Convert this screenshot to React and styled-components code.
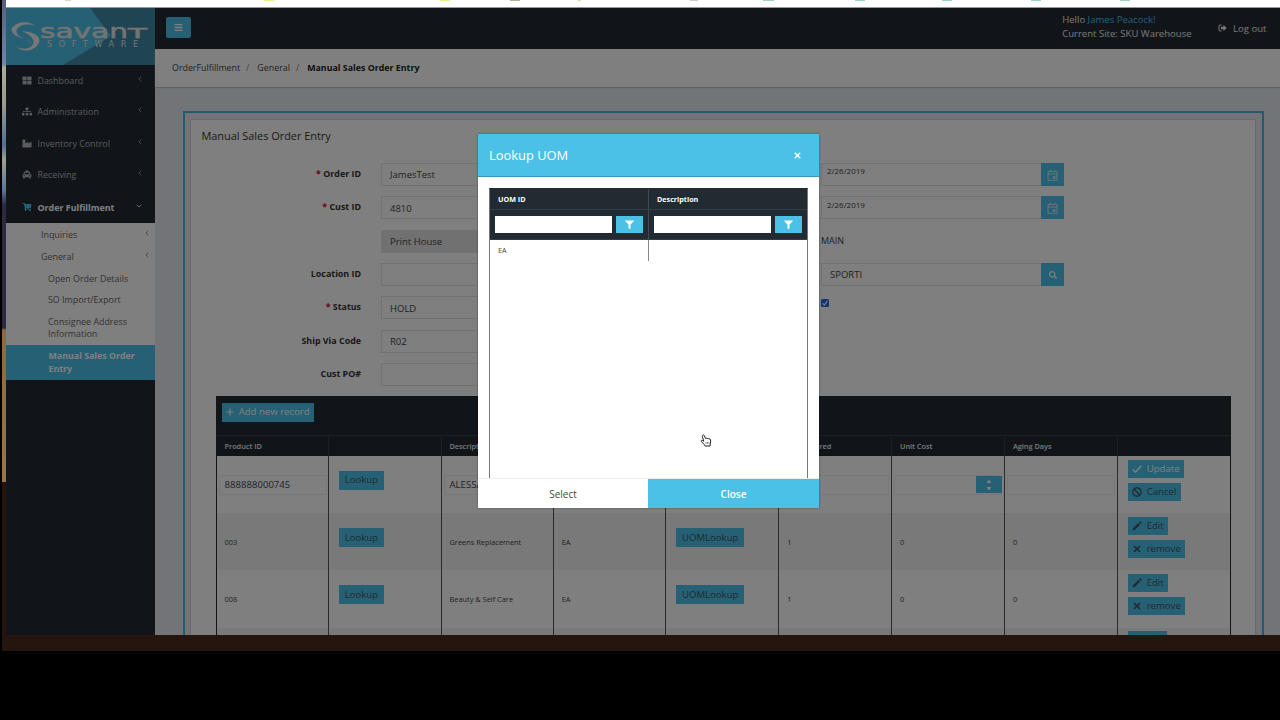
import React from 'react';
import styled, { createGlobalStyle, css } from 'styled-components';
import {
    FaThLarge,
    FaSitemap,
    FaIndustry,
    FaTaxi,
    FaShoppingCart,
    FaBars,
    FaSearch,
} from 'react-icons/fa';

const COLOR = {
    primary: '#4cc1e8',
    dark: '#222a32',
    text: '#444',
    line: '#e4e4e4',
};

const GlobalStyle = createGlobalStyle`
    * {
        box-sizing: border-box;
    }
    body {
        margin: 0;
        background: #000;
        font-family: 'Open Sans', 'Noto Sans', sans-serif;
        font-size: 9px;
        color: ${COLOR.text};
        overflow: hidden;
    }
`;

const Desktop = styled.div`
    display: flex;
    align-items: flex-start;
    height: 651px;
    margin-left: 2px;
    background: #24150f;
    overflow: hidden;
`;

const Wallpaper = styled.div`
    width: 4px;
    height: 482px;
    flex: none;
    background: linear-gradient(
        #56617a 0,
        #6e86a8 64px,
        #a9a89c 68px,
        #97988f 105px,
        #546e98 145px,
        #a0a092 160px,
        #5d7599 190px,
        #2d2940 205px,
        #2d2940 328px,
        #8c6a3d 330px,
        #9b7549 100%
    );
`;

const Browser = styled.div`
    flex: 1;
    min-width: 0;
    height: 635px;
    display: flex;
    flex-direction: column;
    overflow: hidden;
`;

const BookmarkBar = styled.div`
    height: 8px;
    flex: none;
    background: #fff;
    border-bottom: 1px solid #999;
    & > svg {
        display: block;
    }
`;

const Page = styled.div`
    position: relative;
    flex: 1;
    min-height: 0;
    display: flex;
`;

/* sidebar */

const Sidebar = styled.nav`
    width: 149px;
    flex: none;
    background: ${COLOR.dark};
`;

const Brand = styled.div`
    height: 57px;
    & > svg {
        display: block;
    }
`;

const MenuItem = styled.div`
    height: ${(p) => (p.$active ? 33 : 31.3)}px;
    display: flex;
    align-items: center;
    padding: 0 13px 0 16px;
    font-size: 8.9px;
    color: #b4b8bc;
    & > span {
        flex: 1;
        padding-left: 5.5px;
    }
    & > svg:first-child {
        width: 10px;
        height: 9px;
    }
    & > svg:last-child {
        margin-top: -3px;
        color: #999;
    }
    ${(p) =>
        p.$active &&
        css`
            color: #fff;
            font-weight: 700;
            padding-top: 1px;
            & > svg:first-child {
                color: ${COLOR.primary};
                height: 8px;
            }
            & > svg:last-child {
                color: #ddd;
            }
        `}
`;

const SubMenu = styled.div`
    height: 121.8px;
    padding-top: 0.8px;
    background: #fff;
    color: #666;
`;

const SubItem = styled.div`
    display: flex;
    justify-content: space-between;
    min-height: 21.8px;
    padding: 5px 6.5px 0 ${(p) => (p.$deep ? 42 : 35)}px;
    line-height: 12.3px;
    font-size: 8.9px;
    & > svg {
        margin-top: 1.5px;
        color: #888;
        flex: none;
    }
`;

const ActiveItem = styled.div`
    height: 35.5px;
    padding: 5.5px 10px 0 42.5px;
    line-height: 12.4px;
    font-size: 8.85px;
    font-weight: 700;
    color: #fff;
    background: ${COLOR.primary};
`;

/* main area */

const Main = styled.main`
    flex: 1;
    min-width: 0;
    display: flex;
    flex-direction: column;
    background: #e6e9f0;
`;

const TopBar = styled.header`
    height: 41px;
    flex: none;
    display: flex;
    align-items: center;
    padding: 0 13.5px 0 10.5px;
    background: ${COLOR.dark};
    color: #eee;
    font-size: 9.55px;
`;

const BurgerButton = styled.button`
    width: 25.5px;
    height: 20.5px;
    display: flex;
    align-items: center;
    justify-content: center;
    padding: 0;
    margin-top: -2px;
    border: 0;
    border-radius: 2px;
    background: ${COLOR.primary};
    color: #fff;
    font-size: 9px;
`;

const Greeting = styled.div`
    margin: -3px 26.5px 0 auto;
    line-height: 13.6px;
    & > em {
        font-style: normal;
        color: ${COLOR.primary};
    }
`;

const LogOut = styled.div`
    display: flex;
    align-items: center;
    gap: 6px;
    margin-top: -1px;
`;

const Breadcrumb = styled.div`
    height: 38px;
    flex: none;
    display: flex;
    align-items: center;
    gap: 6px;
    padding: 0 0 1px 17px;
    font-size: 8.85px;
    color: #444;
    background: #fff;
    box-shadow: 0 1px 1px #c4c4c8;
    & > i {
        font-style: normal;
        color: #888;
        padding-right: 2px;
    }
    & > b {
        color: #222;
    }
`;

const Frame = styled.section`
    margin: 24px 16px 0 28px;
    padding: 6.5px 7px 0 6px;
    flex: 1;
    min-height: 0;
    border: 2px solid #45b4dc;
    border-bottom: 0;
    overflow: hidden;
`;

const Panel = styled.div`
    height: 560px;
    background: #fff;
    box-shadow: 0 0 2px #aaa;
`;

const PanelTitle = styled.h1`
    margin: 0;
    height: 43.5px;
    padding: 7px 0 0 10.5px;
    font-size: 10.9px;
    line-height: 18px;
    font-weight: 400;
    color: #333;
`;

const Form = styled.div`
    display: grid;
    grid-template-columns: 170px 225px 1fr;
    grid-auto-rows: 33.35px;
    height: 233px;
`;

const Label = styled.label`
    height: 22px;
    font-size: 8.9px;
    font-weight: 700;
    line-height: 22px;
    text-align: right;
    color: #333;
    & > em {
        font-style: normal;
        color: #e2002a;
    }
`;

const Field = styled.div`
    height: 23px;
    display: flex;
    align-items: center;
    justify-content: space-between;
    margin-left: ${(p) => (p.$right ? 235 : 20)}px;
    width: ${(p) => (p.$right ? 243 : 205)}px;
    padding-left: ${(p) => (p.$date ? 5 : 8)}px;
    border: 1px solid ${COLOR.line};
    background: ${(p) => (p.$disabled ? '#e2e2e2' : '#fff')};
    font-size: ${(p) => (p.$date ? 8 : 9.5)}px;
    & > span {
        padding-top: ${(p) => (p.$date ? 0 : 0.5)}px;
        margin-top: ${(p) => (p.$date ? -7.5 : 0)}px;
    }
`;

const FieldButton = styled.button`
    width: 23px;
    height: 23px;
    margin-right: -1px;
    display: flex;
    align-items: center;
    justify-content: center;
    padding: 0;
    border: 0;
    background: ${COLOR.primary};
    color: #fff;
    font-size: 8px;
`;

const PlainValue = styled.div`
    margin-left: 235px;
    line-height: 22px;
    font-size: 9px;
`;

const Checkbox = styled.div`
    width: 8px;
    height: 8px;
    margin: 3px 0 0 235px;
    display: flex;
    align-items: center;
    justify-content: center;
    border-radius: 1.5px;
    background: #2b6be4;
`;

/* order lines */

const COLUMNS =
    '112.5px 112.5px 112.2px 112.6px 113px 112.7px 113px 113px 1fr';

const Grid = styled.div`
    margin: 0 24px 0 24.5px;
    border: 1px solid ${COLOR.dark};
`;

const GridToolbar = styled.div`
    height: 37.5px;
    padding: 6px 0 0 5.5px;
    background: ${COLOR.dark};
`;

const Button = styled.button`
    height: 18.5px;
    display: inline-flex;
    align-items: center;
    gap: 4.5px;
    padding: 0 ${(p) => (p.$wide ? 5.7 : 4.2)}px;
    border: 0;
    background: ${COLOR.primary};
    color: ${(p) => (p.$light ? '#fff' : '#46525c')};
    font-family: inherit;
    font-size: 9.6px;
    line-height: 18px;
    white-space: nowrap;
`;

const GridHead = styled.div`
    display: grid;
    grid-template-columns: ${COLUMNS};
    height: 21.5px;
    background: ${COLOR.dark};
    border-top: 1px solid #38414a;
    color: #eee;
    font-size: 7.3px;
    font-weight: 600;
    & > div {
        padding-left: 8px;
        line-height: 20px;
        border-right: 1px solid #38414a;
    }
    & > div:last-child {
        border-right: 0;
    }
`;

const GridRow = styled.div`
    display: grid;
    grid-template-columns: ${COLUMNS};
    height: 57.2px;
    background: ${(p) => (p.$alt ? '#f2f2f2' : '#fff')};
`;

const Cell = styled.div`
    display: flex;
    align-items: center;
    padding: ${(p) => (p.$lift ? 0 : 0.5)}px 1px ${(p) => (p.$lift ? 8.5 : 0)}px
        ${(p) => p.$left ?? 8}px;
    border-right: 1px solid #555;
    font-size: 7.4px;
`;

const CellInput = styled.div`
    width: 107.5px;
    height: 19.5px;
    display: flex;
    align-items: center;
    justify-content: space-between;
    padding-left: 4.5px;
    border: 1px solid #f0f0f0;
    font-size: 9.6px;
`;

const Stepper = styled.div`
    width: 26px;
    height: 17px;
    margin-right: -1px;
    display: flex;
    align-items: center;
    justify-content: center;
    background: ${COLOR.primary};
`;

const Actions = styled.div`
    display: flex;
    flex-direction: column;
    align-items: flex-start;
    gap: 4.5px;
    padding: 3.6px 0 0 10px;
`;

const ActionStub = styled.div`
    width: 39px;
    height: 18.5px;
    background: ${COLOR.primary};
`;

/* modal */

const Overlay = styled.div`
    position: absolute;
    inset: 0;
    background: rgba(0, 0, 0, 0.5);
`;

const Modal = styled.div`
    position: absolute;
    left: 472px;
    top: 126px;
    width: 341px;
    height: 374px;
    display: flex;
    flex-direction: column;
    background: #fff;
    box-shadow: 0 0 2px rgba(0, 0, 0, 0.4);
`;

const ModalHeader = styled.div`
    height: 43px;
    flex: none;
    display: flex;
    align-items: center;
    justify-content: space-between;
    padding: 0 17.5px 1px 11px;
    background: ${COLOR.primary};
    border-bottom: 1px solid #3a96b8;
    color: #fff;
    font-size: 12.9px;
    & > svg {
        margin-top: 1px;
    }
`;

const ModalBody = styled.div`
    flex: 1;
    padding: 11px 11px 0;
`;

const LookupGrid = styled.div`
    height: 100%;
    border: 1px solid #777;
    border-bottom: 0;
    border-top-color: ${COLOR.dark};
`;

const LookupRow = styled.div`
    display: grid;
    grid-template-columns: 159px 1fr;
    height: ${(p) => p.$height}px;
    ${(p) =>
        p.$dark &&
        css`
            background: ${COLOR.dark};
            color: #fff;
            font-weight: 700;
            border-bottom: 1px solid #343e47;
        `}
    & > div {
        display: flex;
        align-items: center;
        gap: 3.5px;
        padding-left: ${(p) => (p.$filter ? 5 : 8)}px;
        font-size: 7.2px;
        border-right: 1px solid ${(p) => (p.$dark ? '#414b54' : '#888')};
    }
    & > div:last-child {
        border-right: 0;
    }
`;

const FilterInput = styled.div`
    width: 117px;
    height: 17px;
    background: #fff;
`;

const FilterButton = styled.div`
    width: 27px;
    height: 17px;
    display: flex;
    align-items: center;
    justify-content: center;
    background: ${COLOR.primary};
`;

const ModalFooter = styled.div`
    height: 30px;
    flex: none;
    display: grid;
    grid-template-columns: 170px 1fr;
    border-top: 1px solid #eee;
    font-size: 10px;
    & > div {
        display: flex;
        align-items: center;
        justify-content: center;
    }
    & > div:last-child {
        background: ${COLOR.primary};
        color: #fff;
        font-weight: 600;
    }
`;

const Pointer = styled.div`
    position: absolute;
    left: 693.5px;
    top: 426px;
    & > svg {
        display: block;
    }
`;

/* icons */

const Logo = () => (
    <svg width="149" height="57" viewBox="0 0 149 57">
        <rect width="149" height="57" fill={COLOR.primary} />
        <path d="M84 0H149V57H57L105 28Z" fill="#3e88a8" />
        <g fill="#eee">
            <path d="M30 18.500C25 13 12 12 5.500 20.500C5.500 26 10 28.500 17 30.500C21 32 25 33 25.500 37C23 31 17 31.500 13 28C9 24.500 10 20.500 14.500 18C19 16 25 16 30 18.500Z" />
            <path d="M16 23C25 24 33.500 26 33.500 33C31.500 42 18 46 10.500 39C17 42 24 41 27 36.500C29.500 31 24 27 16 23Z" />
        </g>
        <g fill="#e8e8e8" stroke="#e8e8e8" strokeWidth=".5" fontFamily="DejaVu Sans, sans-serif">
            <text x="34" y="30" fontSize="19" textLength="88" lengthAdjust="spacingAndGlyphs">
                savan
            </text>
            <text x="122" y="30" fontSize="14.500" textLength="19" lengthAdjust="spacingAndGlyphs">
                T
            </text>
            <text x="41" y="39" fontSize="8" letterSpacing="6" textLength="97" strokeWidth="0">
                SOFTWARE
            </text>
        </g>
    </svg>
);

const ChevronLeft = () => (
    <svg width="4" height="6" viewBox="0 0 4 6" fill="none" stroke="currentColor">
        <path d="M3.300 .6L.9 3L3.300 5.400" strokeWidth=".9" />
    </svg>
);

const ChevronDown = () => (
    <svg width="6" height="4" viewBox="0 0 6 4" fill="none" stroke="currentColor">
        <path d="M.6 .7L3 3.100L5.400 .7" strokeWidth=".9" />
    </svg>
);

const SignOutIcon = () => (
    <svg width="9" height="8" viewBox="0 0 18 16">
        <path d="M7 2H4a2 2 0 0 0-2 2v8a2 2 0 0 0 2 2h3" fill="none" stroke="currentColor" strokeWidth="2" />
        <path d="M6 5.500h5V2l6.500 6-6.500 6v-3.500H6Z" fill="currentColor" />
    </svg>
);

const CalendarIcon = () => (
    <svg width="11" height="12" viewBox="0 0 11 12" fill="none" stroke="#d4e8f0">
        <path d="M1 2.500H10V11.300H1ZM1 5H10M3.300 .5V3M7.700 .5V3" />
        <path d="M5.800 7.200H8.500V9.800H5.800Z" fill="#d4e8f0" stroke="none" />
    </svg>
);

const FunnelIcon = () => (
    <svg width="9" height="9" viewBox="0 0 9 9">
        <path d="M.3 .5H8.700V1.300L5.500 4.500V8.800H3.500V4.500L.3 1.300Z" fill="#fff" />
    </svg>
);

const CheckIcon = () => (
    <svg width="10" height="10" viewBox="0 0 10 10">
        <path d="M.8 5.500L3.500 8.200L9.300 1.800" fill="none" stroke="currentColor" strokeWidth="1.400" />
    </svg>
);

const CancelIcon = () => (
    <svg width="10" height="10" viewBox="0 0 10 10" fill="none" stroke="currentColor" strokeWidth="1.200">
        <circle cx="5" cy="5" r="4.200" />
        <path d="M2 2L8 8" />
    </svg>
);

const PencilIcon = () => (
    <svg width="10" height="10" viewBox="0 0 10 10" fill="currentColor">
        <path d="M.4 9.600L1.200 7L6.300 1.900L8.100 3.700L3 8.800Z" />
        <path d="M6.900 1.300L8 .3Q8.400 0 8.800 .4L9.600 1.200Q10 1.600 9.700 2L8.700 3.100Z" />
    </svg>
);

const CrossIcon = ({ size = 10 }) => (
    <svg width={size} height={size} viewBox="0 0 10 10">
        <path d="M2 2L8 8M8 2L2 8" stroke="currentColor" strokeWidth="1.700" />
    </svg>
);

const PlusIcon = () => (
    <svg width="8" height="8" viewBox="0 0 8 8">
        <path d="M4 .5V7.500M.5 4H7.500" stroke="currentColor" strokeWidth="1.200" />
    </svg>
);

const StepIcon = () => (
    <svg width="6" height="12" viewBox="0 0 6 12" fill="#fff">
        <path d="M.5 4L3 .5L5.500 4ZM.5 8L3 11.500L5.500 8Z" />
    </svg>
);

const HandIcon = () => (
    <svg width="13" height="13" viewBox="0 0 13 13" fill="#fff" stroke="#222" strokeLinejoin="round">
        <path d="M2.700 1.200Q3.700 .5 4.300 1.500L5.500 4.600Q6.500 3.800 7.200 4.600Q8.200 4 8.900 4.900Q10.200 4.500 10.500 5.900Q11 8 10.300 9.500L10 12H5L4.600 10.800L1.300 7.700Q.6 6.700 1.600 6.300Q2.600 6.200 3.800 7.300L2.300 2.400Q2.200 1.600 2.700 1.200Z" />
        <path d="M6 8V10M7.500 8V10M9 8V10" strokeWidth=".5" />
    </svg>
);

// favicons peeking in from above the visible part of the bar
const FAVICONS = [
    [59, 6, '#d8d8c8'],
    [258, 11, '#f0ee90'],
    [434, 10, '#f0ee90'],
    [504, 10, '#b0b098'],
    [572, 3, '#e4dc98'],
    [684, 8, '#ccc'],
    [757, 11, '#98d8b8'],
    [849, 10, '#98d8b8'],
    [936, 10, '#98d8b8'],
    [1025, 10, '#98d8b8'],
    [1114, 10, '#98d8b8'],
];

const MENU = [
    { icon: <FaThLarge />, title: 'Dashboard' },
    { icon: <FaSitemap />, title: 'Administration' },
    { icon: <FaIndustry />, title: 'Inventory Control' },
    { icon: <FaTaxi />, title: 'Receiving' },
];

const FORM = [
    { label: 'Order ID', required: true, value: 'JamesTest', date: '2/26/2019' },
    { label: 'Cust ID', required: true, value: '4810', date: '2/26/2019' },
    { value: 'Print House', disabled: true, plain: 'MAIN' },
    { label: 'Location ID', value: '', search: 'SPORTI' },
    { label: 'Status', required: true, value: 'HOLD', checked: true },
    { label: 'Ship Via Code', value: 'R02' },
    { label: 'Cust PO#', value: '' },
];

const HEADS = ['Product ID', '', 'Description', 'UOM', '', 'Qty Ordered', 'Unit Cost', 'Aging Days', ''];

const LINES = [
    { id: '003', description: 'Greens Replacement' },
    { id: '008', description: 'Beauty & Self Care' },
];

const RightField = ({ row }) => {
    if (row.date) {
        return (
            <Field $right $date>
                <span>{row.date}</span>
                <FieldButton>
                    <CalendarIcon />
                </FieldButton>
            </Field>
        );
    }
    if (row.plain) {
        return <PlainValue>{row.plain}</PlainValue>;
    }
    if (row.search) {
        return (
            <Field $right>
                <span>{row.search}</span>
                <FieldButton>
                    <FaSearch />
                </FieldButton>
            </Field>
        );
    }
    if (row.checked) {
        return (
            <Checkbox>
                <svg width="6" height="6" viewBox="0 0 10 10">
                    <path d="M1 5.500L4 8.500L9 1.500" fill="none" stroke="#fff" strokeWidth="1.800" />
                </svg>
            </Checkbox>
        );
    }
    return <div />;
};

const OrderForm = () => (
    <Form>
        {FORM.map((row, index) => (
            <React.Fragment key={index}>
                <Label>
                    {row.required && <em>* </em>}
                    {row.label}
                </Label>
                <Field $disabled={row.disabled}>
                    <span>{row.value}</span>
                </Field>
                <RightField row={row} />
            </React.Fragment>
        ))}
    </Form>
);

const EditRow = () => (
    <GridRow>
        <Cell $left={2.5}>
            <CellInput>888888000745</CellInput>
        </Cell>
        <Cell $left={10} $lift>
            <Button $wide>Lookup</Button>
        </Cell>
        <Cell $left={2.5}>
            <CellInput>ALESSANDRO</CellInput>
        </Cell>
        <Cell />
        <Cell />
        <Cell $left={2.5}>
            <CellInput />
        </Cell>
        <Cell $left={2.5}>
            <CellInput>
                <span />
                <Stepper>
                    <StepIcon />
                </Stepper>
            </CellInput>
        </Cell>
        <Cell $left={2.5}>
            <CellInput />
        </Cell>
        <Actions>
            <Button $light>
                <CheckIcon />
                Update
            </Button>
            <Button>
                <CancelIcon />
                Cancel
            </Button>
        </Actions>
    </GridRow>
);

const LineRow = ({ line, alt }) => (
    <GridRow $alt={alt}>
        <Cell>{line.id}</Cell>
        <Cell $left={10} $lift>
            <Button $wide>Lookup</Button>
        </Cell>
        <Cell>{line.description}</Cell>
        <Cell>EA</Cell>
        <Cell $left={10} $lift>
            <Button $wide>UOMLookup</Button>
        </Cell>
        <Cell>1</Cell>
        <Cell>0</Cell>
        <Cell>0</Cell>
        <Actions>
            <Button>
                <PencilIcon />
                Edit
            </Button>
            <Button>
                <CrossIcon />
                remove
            </Button>
        </Actions>
    </GridRow>
);

// only the top few pixels of this row are above the fold
const NextRow = () => (
    <GridRow $alt>
        {HEADS.slice(1).map((_, index) => (
            <Cell key={index} />
        ))}
        <Actions>
            <ActionStub />
        </Actions>
    </GridRow>
);

const LookupModal = () => (
    <Modal>
        <ModalHeader>
            <span>Lookup UOM</span>
            <CrossIcon size={9} />
        </ModalHeader>
        <ModalBody>
            <LookupGrid>
                <LookupRow $dark $height={21}>
                    <div>UOM ID</div>
                    <div>Description</div>
                </LookupRow>
                <LookupRow $dark $filter $height={29.5}>
                    {[0, 1].map((key) => (
                        <div key={key}>
                            <FilterInput />
                            <FilterButton>
                                <FunnelIcon />
                            </FilterButton>
                        </div>
                    ))}
                </LookupRow>
                <LookupRow $height={21.5}>
                    <div>EA</div>
                    <div />
                </LookupRow>
            </LookupGrid>
        </ModalBody>
        <ModalFooter>
            <div>Select</div>
            <div>Close</div>
        </ModalFooter>
    </Modal>
);

export default function App() {
    return (
        <>
            <GlobalStyle />
            <Desktop>
                <Wallpaper />
                <Browser>
                    <BookmarkBar>
                        <svg width="1274" height="1">
                            {FAVICONS.map(([x, width, fill]) => (
                                <rect key={x} x={x} width={width} height="1" fill={fill} />
                            ))}
                        </svg>
                    </BookmarkBar>
                    <Page>
                        <Sidebar>
                            <Brand>
                                <Logo />
                            </Brand>
                            {MENU.map((item) => (
                                <MenuItem key={item.title}>
                                    {item.icon}
                                    <span>{item.title}</span>
                                    <ChevronLeft />
                                </MenuItem>
                            ))}
                            <MenuItem $active>
                                <FaShoppingCart />
                                <span>Order Fulfillment</span>
                                <ChevronDown />
                            </MenuItem>
                            <SubMenu>
                                <SubItem>
                                    Inquiries
                                    <ChevronLeft />
                                </SubItem>
                                <SubItem>
                                    General
                                    <ChevronLeft />
                                </SubItem>
                                <SubItem $deep>Open Order Details</SubItem>
                                <SubItem $deep>SO Import/Export</SubItem>
                                <SubItem $deep>Consignee Address Information</SubItem>
                            </SubMenu>
                            <ActiveItem>Manual Sales Order Entry</ActiveItem>
                        </Sidebar>
                        <Main>
                            <TopBar>
                                <BurgerButton>
                                    <FaBars />
                                </BurgerButton>
                                <Greeting>
                                    Hello <em>James Peacock!</em>
                                    <br />
                                    Current Site: SKU Warehouse
                                </Greeting>
                                <LogOut>
                                    <SignOutIcon />
                                    Log out
                                </LogOut>
                            </TopBar>
                            <Breadcrumb>
                                <span>OrderFulfillment</span>
                                <i>/</i>
                                <span>General</span>
                                <i>/</i>
                                <b>Manual Sales Order Entry</b>
                            </Breadcrumb>
                            <Frame>
                                <Panel>
                                    <PanelTitle>Manual Sales Order Entry</PanelTitle>
                                    <OrderForm />
                                    <Grid>
                                        <GridToolbar>
                                            <Button $light>
                                                <PlusIcon />
                                                Add new record
                                            </Button>
                                        </GridToolbar>
                                        <GridHead>
                                            {HEADS.map((head, index) => (
                                                <div key={index}>{head}</div>
                                            ))}
                                        </GridHead>
                                        <EditRow />
                                        {LINES.map((line, index) => (
                                            <LineRow key={line.id} line={line} alt={index % 2 === 0} />
                                        ))}
                                        <NextRow />
                                    </Grid>
                                </Panel>
                            </Frame>
                        </Main>
                        <Overlay />
                        <LookupModal />
                        <Pointer>
                            <HandIcon />
                        </Pointer>
                    </Page>
                </Browser>
            </Desktop>
        </>
    );
}
